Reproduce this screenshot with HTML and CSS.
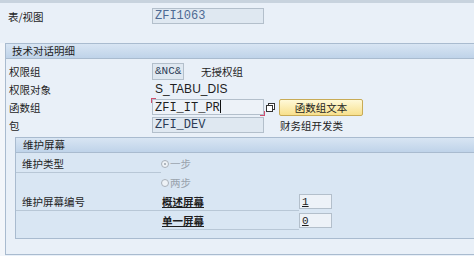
FILE: index.html
```html
<!DOCTYPE html>
<html lang="zh-CN">
<head>
    <meta charset="UTF-8">
    <title>表/视图</title>
    <link rel="stylesheet" href="styles.css">
</head>
<body>

<div class="topbar"></div>

<div class="screen">
    <div class="row first-row">
        <span class="label">表/视图</span>
        <span class="field ro wide">ZFI1063</span>
    </div>

    <div class="group outer">
        <div class="group-title">技术对话明细</div>
        <div class="group-body">
            <div class="row">
                <span class="label">权限组</span>
                <span class="field ro short">&amp;NC&amp;</span>
                <span class="note">无授权组</span>
            </div>
            <div class="row">
                <span class="label">权限对象</span>
                <span class="plain">S_TABU_DIS</span>
            </div>
            <div class="row">
                <span class="label">函数组</span>
                <span class="field edit wide focus">ZFI_IT_PR<span class="caret"></span></span>
                <span class="help-icon">
                    <svg width="9" height="9" viewBox="0 0 9 9">
                        <rect x="2.5" y="0.5" width="6" height="6" fill="#fff" stroke="#333"/>
                        <rect x="0.5" y="2.5" width="6" height="6" fill="#fff" stroke="#333"/>
                    </svg>
                </span>
                <button class="sap-btn">函数组文本</button>
            </div>
            <div class="row">
                <span class="label">包</span>
                <span class="field ro wide">ZFI_DEV</span>
                <span class="note pkg">财务组开发类</span>
            </div>

            <div class="group inner">
                <div class="group-title">维护屏幕</div>
                <div class="group-body">
                    <div class="row">
                        <span class="label line">维护类型</span>
                        <span class="radio disabled checked"><i></i>一步</span>
                    </div>
                    <div class="row">
                        <span class="label"></span>
                        <span class="radio disabled"><i></i>两步</span>
                    </div>
                    <div class="row">
                        <span class="label line">维护屏幕编号</span>
                        <span class="link">概述屏幕</span>
                        <span class="field edit num">1</span>
                    </div>
                    <div class="row">
                        <span class="label"></span>
                        <span class="link">单一屏幕</span>
                        <span class="field edit num">0</span>
                    </div>
                </div>
            </div>
        </div>
    </div>
</div>

</body>
</html>
```

FILE: styles.css
```css
body {
    margin: 0;
    background: #fff;
    font-family: "Noto Sans CJK SC", "Liberation Sans", sans-serif;
    font-size: 10.5px;
    color: #1e1e1e;
    height: 259px;
    overflow: hidden;
}
.topbar {
    height: 3px;
    background: #c8d3de;
}
.screen {
    background: linear-gradient(90deg, #f3f6fa 5px, #e9f0f8 5px);
    padding-bottom: 1px;
}
.first-row {
    background: #e9f0f8;
}
.row {
    display: flex;
    align-items: center;
    height: 18px;
}
.first-row {
    height: 18px;
    padding: 4px 0 18px 0;
}
.first-row .label {
    padding-left: 8px;
    width: 152px;
}
.label {
    width: 146px;
    flex: none;
    box-sizing: border-box;
    padding-left: 3px;
    white-space: nowrap;
}
.field {
    box-sizing: border-box;
    height: 16px;
    border: 1px solid #b3bfcb;
    font-family: "Liberation Mono", monospace;
    font-size: 12px;
    line-height: 14px;
    padding-left: 2px;
    position: relative;
}
.field.ro {
    background: #dfe8f1;
    color: #2b3b55;
}
.first-row .field {
    color: #4e6a93;
}
.field.edit {
    background: #edf2f8;
}
.wide {
    width: 112px;
}
.short {
    width: 32px;
    height: 17px;
    font-size: 11px;
}
.note {
    margin-left: 17px;
}
.note.pkg {
    margin-left: 16px;
}
.plain {
    font-family: "Liberation Sans", sans-serif;
    font-size: 12px;
    padding-left: 3px;
}
.caret {
    display: inline-block;
    width: 1px;
    height: 13px;
    background: #111;
    vertical-align: -2px;
}
.field.focus::before, .field.focus::after {
    content: "";
    position: absolute;
    width: 4px;
    height: 4px;
    border-color: #d05070;
    border-style: solid;
}
.field.focus::before {
    left: -2px;
    top: -2px;
    border-width: 1px 0 0 1px;
}
.field.focus::after {
    right: -2px;
    bottom: -2px;
    border-width: 0 1px 1px 0;
}
.help-icon {
    margin-left: 2px;
    width: 9px;
    height: 9px;
    display: flex;
}
.sap-btn {
    margin-left: 4px;
    height: 17px;
    width: 84px;
    padding: 0;
    font-family: inherit;
    font-size: 10.5px;
    color: #1e1e1e;
    border: 1px solid #c8ab56;
    border-radius: 2px;
    background: linear-gradient(#fff9d8, #f7e08d);
}
.group {
    border: 1px solid #a9bbcf;
    border-right: none;
}
.group.outer {
    margin-left: 5px;
    height: 212px;
    box-sizing: border-box;
    background: #e9f0f8;
}
.group-title {
    height: 14px;
    line-height: 14px;
    padding-left: 6px;
    background: linear-gradient(#d8e5f3, #bfd3e9);
    border-bottom: 1px solid #a9bbcf;
}
.outer > .group-body {
    padding-top: 3px;
}
.group.inner {
    margin: 3px 0 0 9px;
    height: 102px;
    box-sizing: border-box;
    background: #d9e6f3;
}
.inner .group-title {
    padding-left: 7px;
}
.inner .group-body {
    padding-top: 1px;
}
.inner .row {
    height: 19px;
}
.inner .label {
    width: 145px;
    padding-left: 6px;
    align-self: stretch;
    display: flex;
    align-items: center;
}
.inner .label.line {
    border-bottom: 1px solid #b8c7d6;
}
.radio {
    color: #9aa3ad;
    display: flex;
    align-items: center;
}
.radio i {
    width: 8px;
    height: 8px;
    border: 1px solid #a9b1ba;
    border-radius: 50%;
    margin-right: 1px;
    box-sizing: border-box;
    position: relative;
    background: #eef2f6;
}
.radio.checked i::after {
    content: "";
    position: absolute;
    left: 2px;
    top: 2px;
    width: 2px;
    height: 2px;
    border-radius: 50%;
    background: #9aa3ad;
}
.link {
    width: 138px;
    flex: none;
    font-weight: bold;
    text-decoration: underline;
    align-self: stretch;
    display: flex;
    align-items: center;
    border-bottom: 1px solid #b8c7d6;
    box-sizing: border-box;
    padding-left: 1px;
}
.num {
    width: 33px;
    height: 15px;
    text-decoration: underline;
    font-size: 11px;
}
```
